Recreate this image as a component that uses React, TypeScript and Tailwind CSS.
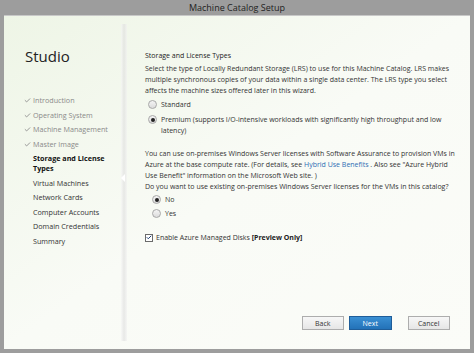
import { Check } from "lucide-react"

const steps = [
  { label: "Introduction", done: true },
  { label: "Operating System", done: true },
  { label: "Machine Management", done: true },
  { label: "Master Image", done: true },
  { label: "Storage and License Types", current: true },
  { label: "Virtual Machines" },
  { label: "Network Cards" },
  { label: "Computer Accounts" },
  { label: "Domain Credentials" },
  { label: "Summary" },
]

function Radio({ checked }: { checked?: boolean }) {
  return (
    <span className="w-[9px] h-[9px] rounded-full border border-[#a8a8a8] bg-gradient-to-b from-[#f4f4f4] to-[#dcdcdc] flex items-center justify-center shrink-0">
      {checked && <span className="w-[4px] h-[4px] rounded-full bg-[#222]" />}
    </span>
  )
}

export default function App() {
  return (
    <div
      className="w-[474px] h-[353px] bg-[#9d9d9d] flex flex-col text-[#333]"
      style={{ fontFamily: "'Open Sans', 'Liberation Sans', sans-serif" }}
    >
      <div className="h-[15px] flex items-center justify-center text-[9px] text-[#222]">Machine Catalog Setup</div>
      <div className="flex-1 mx-[4px] mb-[4px] flex bg-gradient-to-br from-[#eef5e6] via-[#f9fbf6] to-[#fbfcf8] border-t border-[#c8c8c8]">
        {/* sidebar */}
        <div className="w-[119px] shrink-0 relative pl-[21px] pt-[31px]">
          <div className="text-[15px] leading-[18px] text-[#222] mb-[30px]">Studio</div>
          <ul className="flex flex-col">
            {steps.map((s, i) => (
              <li
                key={i}
                className={`relative pl-[8px] text-[7.2px] leading-[10px] mb-[4.5px] ${
                  s.done ? "text-[#8a8a8a]" : s.current ? "text-[#111] font-bold pr-[18px]" : "text-[#333]"
                }`}
              >
                {s.done && <Check className="absolute left-[-1px] top-[2px] w-[7px] h-[7px] text-[#8a8a8a]" strokeWidth={3} />}
                {s.label}
              </li>
            ))}
          </ul>
          <div className="absolute right-[-4px] top-[8px] bottom-[8px] w-[6px] bg-gradient-to-r from-[#f6f6f6] via-[#dcdcdc] to-[#f2f2f2] opacity-60" />
          <div className="absolute right-[-2px] top-[158px] w-0 h-0 border-y-[4px] border-y-transparent border-r-[4px] border-r-white" />
        </div>

        {/* content */}
        <div className="flex-1 flex flex-col pl-[22px] pr-[18px] pt-[34px] pb-[19px] text-[7px] leading-[11px] text-[#333]">
          <div className="text-[#222] mb-[2px]">Storage and License Types</div>
          <p className="whitespace-nowrap">
            Select the type of Locally Redundant Storage (LRS) to use for this Machine Catalog. LRS makes
            <br />
            multiple synchronous copies of your data within a single data center. The LRS type you select
            <br />
            affects the machine sizes offered later in this wizard.
          </p>
          <div className="flex items-center gap-[4px] ml-[3px] mt-[3px]">
            <Radio />
            <span>Standard</span>
          </div>
          <div className="flex items-start gap-[4px] ml-[3px] mt-[4px]">
            <span className="mt-[1px]">
              <Radio checked />
            </span>
            <span className="whitespace-nowrap">
              Premium (supports I/O-intensive workloads with significantly high throughput and low
              <br />
              latency)
            </span>
          </div>
          <p className="whitespace-nowrap mt-[12px]">
            You can use on-premises Windows Server licenses with Software Assurance to provision VMs in
            <br />
            Azure at the base compute rate. (For details, see <span className="text-[#2e6db4]">Hybrid Use Benefits</span> . Also see "Azure Hybrid
            <br />
            Use Benefit" information on the Microsoft Web site. )
            <br />
            Do you want to use existing on-premises Windows Server licenses for the VMs in this catalog?
          </p>
          <div className="flex items-center gap-[4px] ml-[7px] mt-[2px]">
            <Radio checked />
            <span>No</span>
          </div>
          <div className="flex items-center gap-[4px] ml-[7px] mt-[3px]">
            <Radio />
            <span>Yes</span>
          </div>
          <div className="flex items-center gap-[3px] mt-[13px]">
            <span className="w-[8px] h-[8px] border border-[#6b6b6b] bg-white flex items-center justify-center">
              <Check className="w-[7px] h-[7px] text-[#1e3f73]" strokeWidth={4} />
            </span>
            <span>
              Enable Azure Managed Disks <span className="font-bold text-[#222]">[Preview Only]</span>
            </span>
          </div>

          <div className="mt-auto flex justify-end gap-[5px] pr-[5px]">
            <button className="w-[42px] h-[14px] border border-[#adadad] bg-gradient-to-b from-[#f7f7f7] to-[#e6e6e6] text-[7px] text-[#333]">
              Back
            </button>
            <button className="w-[43px] h-[14px] border border-[#1f5d99] bg-gradient-to-b from-[#3a8fd3] to-[#2372b8] text-[7px] text-white mr-[11px]">
              Next
            </button>
            <button className="w-[42px] h-[14px] border border-[#adadad] bg-gradient-to-b from-[#f7f7f7] to-[#e6e6e6] text-[7px] text-[#333]">
              Cancel
            </button>
          </div>
        </div>
      </div>
    </div>
  )
}
